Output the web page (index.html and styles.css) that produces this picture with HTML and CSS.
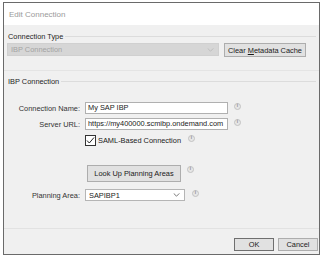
FILE: index.html
```html
<!DOCTYPE html>
<html>
<head>
<meta charset="utf-8">
<link rel="stylesheet" href="styles.css">
</head>
<body>
<div class="dialog">
  <div class="titlebar">Edit Connection</div>
  <div class="group-head"><span>Connection Type</span><i class="rule"></i></div>
  <div class="type-row">
    <div class="select disabled"><span>IBP Connection</span><svg class="chev" viewBox="0 0 8 5" width="7" height="4"><path d="M0.5 0.5 L4 4 L7.5 0.5" fill="none" stroke="#b8b8b8" stroke-width="1"/></svg></div>
    <div class="btn clear"><span>Clear <u>M</u>etadata Cache</span></div>
  </div>
  <div class="faint"></div>
  <div class="group-head second"><span>IBP Connection</span><i class="rule"></i></div>
  <div class="form">
    <div class="row r1"><label>Connection Name:</label><div class="input w1">My SAP IBP</div><i class="info">i</i></div>
    <div class="row r2"><label>Server URL:</label><div class="input w1">https://my400000.scmibp.ondemand.com</div><i class="info">i</i></div>
    <div class="row r3"><label></label><div class="check"><svg viewBox="0 0 11 11" width="11" height="11"><rect x="0.5" y="0.5" width="10" height="10" fill="#fff" stroke="#333"/><path d="M2 5.5 L4.3 8 L9 2.5" fill="none" stroke="#222" stroke-width="1"/></svg><span>SAML-Based Connection</span></div><i class="info">i</i></div>
    <div class="row r4"><label></label><div class="btn lookup">Look Up Planning Areas</div><i class="info">i</i></div>
    <div class="row r5"><label>Planning Area:</label><div class="select pa"><span>SAPIBP1</span><svg class="chev" viewBox="0 0 8 5" width="7" height="4"><path d="M0.5 0.5 L4 4 L7.5 0.5" fill="none" stroke="#555" stroke-width="1"/></svg></div><i class="info">i</i></div>
  </div>
  <div class="footer">
    <div class="btn ok">OK</div>
    <div class="btn cancel">Cancel</div>
  </div>
</div>
</body>
</html>
```
FILE: styles.css
```css
html, body { margin: 0; padding: 0; background: #fff; }
body { font-family: "Liberation Sans", Arial, sans-serif; font-size: 7.4px; color: #1a1a1a; }
.dialog {
  margin: 2px 0 0 3px;
  width: 317px; height: 253px;
  box-sizing: border-box;
  border: 1px solid #6a6a6a;
  background: #f0f0f0;
  display: flex; flex-direction: column;
}
.titlebar {
  height: 22px; line-height: 23px;
  background: #fff; color: #9a9a9a;
  padding-left: 5px; font-size: 8px;
}
.group-head {
  display: flex; align-items: center;
  margin-top: 6px; height: 10px;
  padding-left: 4px; padding-right: 3px;
  color: #1e1e1e;
}
.group-head .rule { flex: 1; height: 1px; background: #dcdcdc; margin-left: 2px; margin-top: 1px; }
.type-row { display: flex; margin-top: 2px; padding-left: 3px; height: 14px; }
.select {
  box-sizing: border-box; height: 13px;
  display: flex; align-items: center; justify-content: space-between;
  padding: 0 4px 0 3px;
  border: 1px solid #b5b5b5; background: #fff;
}
.select.disabled { width: 212px; height: 13px; background: #d6d6d6; border-color: #d0d0d0; color: #a3a3a3; }
.btn {
  box-sizing: border-box;
  display: flex; align-items: center; justify-content: center;
  background: #e1e1e1; border: 1px solid #adadad;
}
.clear { margin-left: 5px; width: 82px; height: 14px; }
.clear u { text-decoration: underline; }
.faint { margin-top: 13px; height: 1px; background: #e4e4e4; }
.group-head.second { margin-top: 5px; }
.form { margin-top: 16px; display: flex; flex-direction: column; }
.row { display: flex; align-items: center; }
.row label { width: 76px; text-align: right; margin-right: 5px; color: #333; }
.input {
  box-sizing: border-box; height: 12px;
  border: 1px solid #b0b0b0; background: #fff;
  padding-left: 2px; line-height: 10px; white-space: nowrap; overflow: hidden;
}
.w1 { width: 143px; }
.info {
  font-style: normal; font-size: 4.5px; color: #8a8a8a; font-weight: bold;
  width: 5px; height: 5px; border-radius: 50%;
  border: 1px solid #c2c2c2; background: #e6e6e6;
  display: flex; align-items: center; justify-content: center;
  margin-left: 6px; margin-top: -4px; line-height: 1;
}
.r2 { margin-top: 4px; }
.r3 { margin-top: 5px; height: 11px; }
.check { display: flex; align-items: center; width: 103px; }
.check svg { margin-right: 2px; }
.r3 .info { margin-left: 0; }
.r4 { margin-top: 19px; }
.lookup { width: 94px; height: 17px; margin-left: 2px; }
.r4 .info { margin-left: 6px; margin-top: -8px; }
.r5 { margin-top: 7px; }
.pa { width: 100px; height: 12px; }
.r5 .info { margin-left: 7px; }
.footer {
  margin-top: auto;
  border-top: 1px solid #e2e2e2;
  display: flex; justify-content: flex-end;
  padding: 9px 1px 3px 0; gap: 4px;
}
.ok { width: 40px; height: 13px; border-color: #6f6f6f; }
.cancel { width: 40px; height: 13px; }
```
